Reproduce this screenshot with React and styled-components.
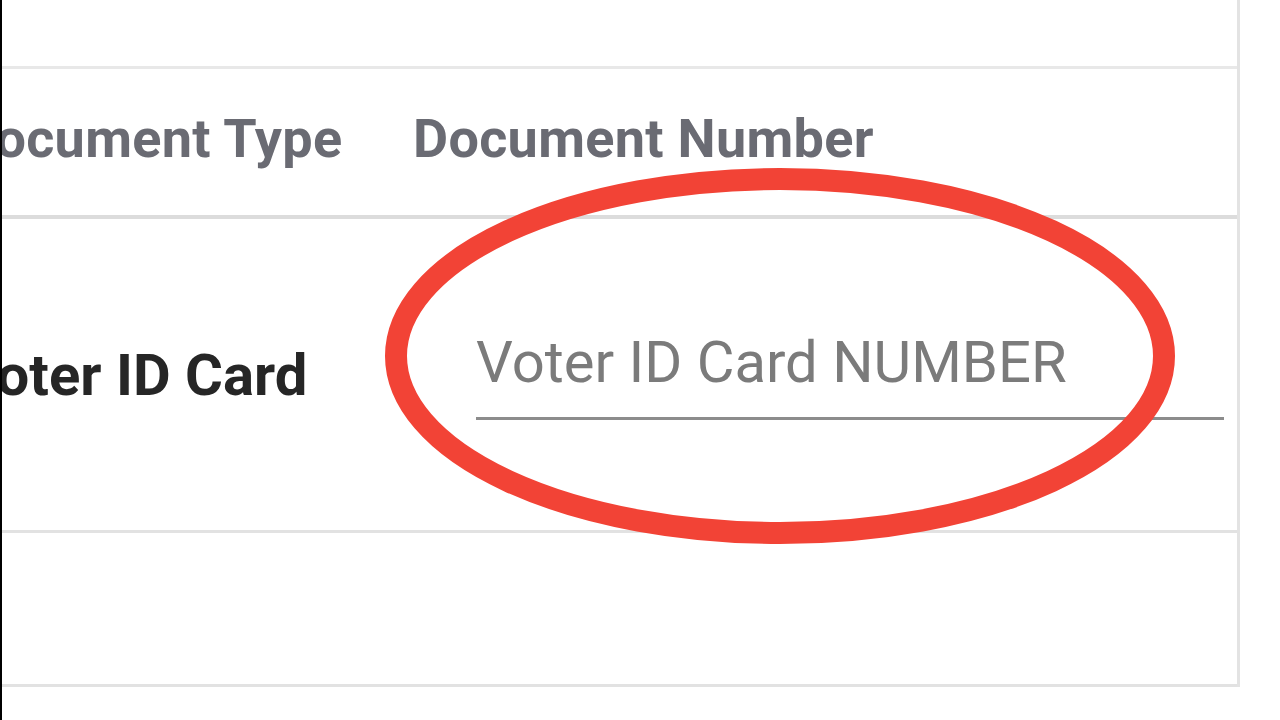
import styled, { createGlobalStyle } from 'styled-components';

const GlobalStyle = createGlobalStyle`
    html, body {
        margin: 0;
        padding: 0;
        background: #ffffff;
    }
    body {
        font-family: Roboto, "Noto Sans", sans-serif;
    }
`

const Page = styled.div`
    position: relative;
    width: 1280px;
    height: 720px;
    overflow: hidden;
    box-sizing: border-box;
    border-left: 2px solid #000000;
    background: #ffffff;
`

const Table = styled.div`
    margin-left: -42px;
    width: 1280px;
    box-sizing: border-box;
    border-right: 3px solid #e3e3e3;
`

const Row = styled.div`
    display: grid;
    grid-template-columns: 453px 1fr;
    align-items: center;
    height: ${props => props.height}px;
    border-bottom: ${props => props.line}px solid ${props => props.lineColor || '#e2e2e2'};
`

const HeadCell = styled.div`
    font-size: 54px;
    font-weight: 700;
    color: #6a6b73;
    letter-spacing: 0.3px;
    margin-top: -8px;
`

const LabelCell = styled.div`
    font-size: 58px;
    font-weight: 700;
    color: #262626;
`

const FieldCell = styled.div`
    padding-left: 63px;
    padding-right: 13px;
`

const Field = styled.input`
    display: block;
    width: 100%;
    box-sizing: border-box;
    height: 91px;
    padding: 0 0 22px 0;
    border: none;
    border-bottom: 3px solid #8c8c8c;
    outline: none;
    background: transparent;
    font-family: Roboto, "Noto Sans", sans-serif;
    font-size: 58px;
    line-height: 66px;
    color: #333333;

    &::placeholder {
        color: #7b7b7b;
    }
`

const Ring = styled.svg`
    position: absolute;
    left: 0;
    top: 0;
    pointer-events: none;
`

const App = () => {
    return (
        <Page>
            <GlobalStyle />
            <Table>
                <Row height={66} line={3} lineColor="#e8e8e8" />
                <Row height={146} line={4} lineColor="#dcdcdc">
                    <HeadCell>Document Type</HeadCell>
                    <HeadCell>Document Number</HeadCell>
                </Row>
                <Row height={311} line={3}>
                    <LabelCell>Voter ID Card</LabelCell>
                    <FieldCell>
                        <Field placeholder="Voter ID Card NUMBER" />
                    </FieldCell>
                </Row>
                <Row height={151} line={3} />
            </Table>
            <Ring width="1280" height="720" viewBox="0 0 1280 720">
                <ellipse cx="778" cy="356" rx="384" ry="177" fill="none" stroke="#f24336" strokeWidth="22" />
            </Ring>
        </Page>
    )
}

export default App;
